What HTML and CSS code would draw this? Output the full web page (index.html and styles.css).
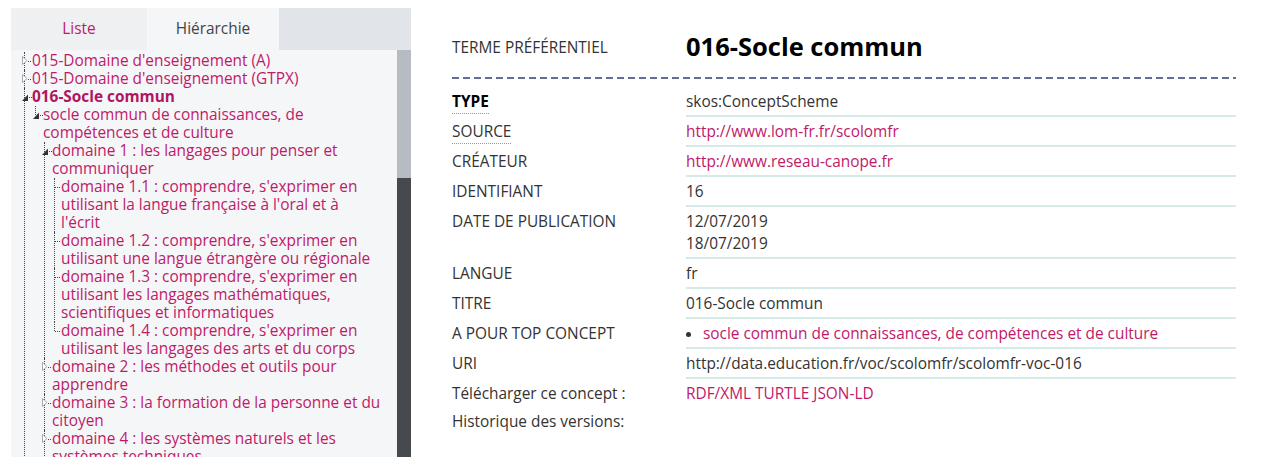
FILE: index.html
```html
<!DOCTYPE html>
<html lang="fr">
<head>
<meta charset="utf-8">
<title>016-Socle commun</title>
<link rel="stylesheet" href="styles.css">
</head>
<body>
<div class="page">
  <aside class="sidebar">
    <div class="tabs">
      <a class="tab tab-list">Liste</a>
      <a class="tab tab-active">Hiérarchie</a>
      <div class="tab-fill"></div>
    </div>
    <div class="tree-wrap">
      <div class="tree">
        <ul class="lvl0">
          <li>
            <div class="row"><svg class="ico" viewBox="0 0 11 18"><path d="M1.5 4.5 L6 8.5 L1.5 12.5 Z" fill="#fff" stroke="#aaa"/><path d="M7 9.5 H11" stroke="#444" stroke-dasharray="1 1"/></svg><a class="node">015-Domaine d'enseignement (A)</a></div>
          </li>
          <li>
            <div class="row"><svg class="ico" viewBox="0 0 11 18"><path d="M1.5 4.5 L6 8.5 L1.5 12.5 Z" fill="#fff" stroke="#aaa"/><path d="M7 9.5 H11" stroke="#444" stroke-dasharray="1 1"/></svg><a class="node">015-Domaine d'enseignement (GTPX)</a></div>
          </li>
          <li>
            <div class="row"><svg class="ico" viewBox="0 0 11 18"><path d="M1 13 L7 6.5 L7 13 Z" fill="#333"/><path d="M8 9.5 H11" stroke="#444" stroke-dasharray="1 1"/></svg><a class="node cur">016-Socle commun</a></div>
            <ul class="lvl1">
              <li class="last">
                <div class="row"><svg class="ico" viewBox="0 0 11 18"><path d="M1 13 L7 6.5 L7 13 Z" fill="#333"/><path d="M8 9.5 H11" stroke="#444" stroke-dasharray="1 1"/></svg><a class="node">socle commun de connaissances, de compétences et de culture</a></div>
                <ul class="lvl2">
                  <li>
                    <div class="row"><svg class="ico" viewBox="0 0 11 18"><path d="M1 13 L7 6.5 L7 13 Z" fill="#333"/><path d="M8 9.5 H11" stroke="#444" stroke-dasharray="1 1"/></svg><a class="node">domaine 1 : les langages pour penser et communiquer</a></div>
                    <ul class="lvl3">
                      <li>
                        <div class="row"><svg class="ico leaf" viewBox="0 0 10 18"><path d="M4 9.5 H10" stroke="#444" stroke-dasharray="1 1"/></svg><a class="node">domaine 1.1 : comprendre, s'exprimer en utilisant la langue française à l'oral et à l'écrit</a></div>
                      </li>
                      <li>
                        <div class="row"><svg class="ico leaf" viewBox="0 0 10 18"><path d="M4 9.5 H10" stroke="#444" stroke-dasharray="1 1"/></svg><a class="node">domaine 1.2 : comprendre, s'exprimer en utilisant une langue étrangère ou régionale</a></div>
                      </li>
                      <li>
                        <div class="row"><svg class="ico leaf" viewBox="0 0 10 18"><path d="M4 9.5 H10" stroke="#444" stroke-dasharray="1 1"/></svg><a class="node">domaine 1.3 : comprendre, s'exprimer en utilisant les langages mathématiques, scientifiques et informatiques</a></div>
                      </li>
                      <li class="last">
                        <div class="row"><svg class="ico leaf" viewBox="0 0 10 18"><path d="M4 9.5 H10" stroke="#444" stroke-dasharray="1 1"/></svg><a class="node">domaine 1.4 : comprendre, s'exprimer en utilisant les langages des arts et du corps</a></div>
                      </li>
                    </ul>
                  </li>
                  <li>
                    <div class="row"><svg class="ico" viewBox="0 0 11 18"><path d="M1.5 4.5 L6 8.5 L1.5 12.5 Z" fill="#fff" stroke="#aaa"/><path d="M7 9.5 H11" stroke="#444" stroke-dasharray="1 1"/></svg><a class="node">domaine 2 : les méthodes et outils pour apprendre</a></div>
                  </li>
                  <li>
                    <div class="row"><svg class="ico" viewBox="0 0 11 18"><path d="M1.5 4.5 L6 8.5 L1.5 12.5 Z" fill="#fff" stroke="#aaa"/><path d="M7 9.5 H11" stroke="#444" stroke-dasharray="1 1"/></svg><a class="node">domaine 3 : la formation de la personne et du citoyen</a></div>
                  </li>
                  <li>
                    <div class="row"><svg class="ico" viewBox="0 0 11 18"><path d="M1.5 4.5 L6 8.5 L1.5 12.5 Z" fill="#fff" stroke="#aaa"/><path d="M7 9.5 H11" stroke="#444" stroke-dasharray="1 1"/></svg><a class="node">domaine 4 : les systèmes naturels et les systèmes techniques</a></div>
                  </li>
                  <li class="last">
                    <div class="row"><svg class="ico" viewBox="0 0 11 18"><path d="M1.5 4.5 L6 8.5 L1.5 12.5 Z" fill="#fff" stroke="#aaa"/><path d="M7 9.5 H11" stroke="#444" stroke-dasharray="1 1"/></svg><a class="node">domaine 5 : les représentations du monde et l'activité humaine</a></div>
                  </li>
                </ul>
              </li>
            </ul>
          </li>
          <li class="last">
            <div class="row"><svg class="ico" viewBox="0 0 11 18"><path d="M1.5 4.5 L6 8.5 L1.5 12.5 Z" fill="#fff" stroke="#aaa"/><path d="M7 9.5 H11" stroke="#444" stroke-dasharray="1 1"/></svg><a class="node">017-Type de diffusion</a></div>
          </li>
        </ul>
      </div>
      <div class="scrollbar"><div class="thumb"></div></div>
    </div>
  </aside>

  <main class="content">
    <div class="pref">
      <div class="plabel">Terme préférentiel</div>
      <h1 class="title">016-Socle commun</h1>
    </div>
    <div class="dash"></div>
    <dl class="props">
      <div class="prop"><dt><span class="abbr strong">Type</span></dt><dd>skos:ConceptScheme</dd></div>
      <div class="prop"><dt><span class="abbr">Source</span></dt><dd><a class="link">http://www.lom-fr.fr/scolomfr</a></dd></div>
      <div class="prop"><dt>Créateur</dt><dd><a class="link">http://www.reseau-canope.fr</a></dd></div>
      <div class="prop"><dt>Identifiant</dt><dd>16</dd></div>
      <div class="prop"><dt>Date de publication</dt><dd>12/07/2019<br>18/07/2019</dd></div>
      <div class="prop"><dt>Langue</dt><dd>fr</dd></div>
      <div class="prop"><dt>Titre</dt><dd>016-Socle commun</dd></div>
      <div class="prop"><dt>A pour top concept</dt><dd><ul class="topc"><li><a class="link">socle commun de connaissances, de compétences et de culture</a></li></ul></dd></div>
      <div class="prop"><dt>URI</dt><dd>http://data.education.fr/voc/scolomfr/scolomfr-voc-016</dd></div>
    </dl>
    <div class="extra">
      <div class="xrow"><span>Télécharger ce concept :</span><span><a class="link">RDF/XML</a> <a class="link">TURTLE</a> <a class="link">JSON-LD</a></span></div>
      <div class="xrow"><span>Historique des versions:</span></div>
    </div>
  </main>
</div>
</body>
</html>
```

FILE: styles.css
```css
html, body {
  margin: 0;
  padding: 0;
}
body {
  font-family: "Open Sans", "Noto Sans", sans-serif;
  font-size: 15.4px;
  color: #333;
  background: #fff;
  overflow: hidden;
}
.page {
  display: flex;
  align-items: flex-start;
}

/* Sidebar */
.sidebar {
  flex: none;
  margin: 8px 0 0 11px;
  width: 400px;
  height: 449px;
  background: #f5f6f8;
  display: flex;
  flex-direction: column;
  overflow: hidden;
}
.tabs {
  flex: none;
  display: flex;
  height: 42px;
  background: #e1e4e8;
}
.tab {
  display: flex;
  align-items: center;
  justify-content: center;
  padding-bottom: 1px;
}
.tab-list {
  width: 136px;
  background: #eef0f2;
  color: #bf1a68;
}
.tab-active {
  width: 132px;
  background: #f5f6f8;
  color: #444;
}
.tree-wrap {
  flex: 1;
  min-height: 0;
  display: flex;
}
.tree {
  flex: 1;
  min-width: 0;
  overflow: hidden;
  padding: 2px 8px 0 13px;
}
.scrollbar {
  flex: none;
  width: 14px;
  background: #46494d;
}
.thumb {
  height: 128px;
  background: #b6bcc2;
}

.tree ul {
  list-style: none;
  margin: 0;
  padding: 0;
}
.tree li {
  position: relative;
  border-left: 1px dotted #444;
}
.tree li.last {
  border-left-color: transparent;
}
.tree li.last::before {
  content: "";
  position: absolute;
  left: -1px;
  top: 0;
  height: 9px;
  border-left: 1px dotted #444;
}
.tree .lvl1 { margin-left: 10px; }
.tree .lvl2 { margin-left: 8px; }
.tree .lvl3 { margin-left: 9px; margin-right: 14px; }
.row {
  display: flex;
  margin-left: -4px;
  line-height: 18px;
}
.ico {
  flex: none;
  width: 11px;
  height: 18px;
}
.ico.leaf {
  width: 10px;
}
.node {
  color: #bf1a68;
}
.node.cur {
  font-weight: 700;
  color: #b0155f;
}

/* Content */
.content {
  flex: none;
  margin-left: 41px;
  width: 784px;
}
.pref {
  display: grid;
  grid-template-columns: 234px 1fr;
  align-items: center;
  height: 32px;
  margin-top: 30px;
}
.plabel {
  text-transform: uppercase;
  color: #333;
  padding-top: 2px;
}
.title {
  margin: 0;
  font-size: 25.5px;
  font-weight: 700;
  line-height: 32px;
  color: #000;
}
.dash {
  height: 2px;
  margin-top: 15px;
  background: repeating-linear-gradient(90deg, #636e96 0 7px, transparent 7px 11px);
}
.props {
  margin: 8px 0 0;
}
.prop {
  display: grid;
  grid-template-columns: 234px 1fr;
}
.prop dt,
.prop dd {
  margin: 0;
  padding: 4px 0 2px;
  line-height: 22px;
}
.prop dt {
  text-transform: uppercase;
  color: #333;
}
.prop dd {
  border-bottom: 2px solid #d5ebe8;
  color: #333;
}
.abbr {
  border-bottom: 1px dotted #999;
  padding-bottom: 1px;
}
.abbr.strong {
  font-weight: 700;
  color: #000;
}
.link {
  color: #bf1a68;
}
.topc {
  margin: 0;
  padding-left: 17px;
  list-style: disc;
}
.extra {
  margin: 0;
}
.xrow {
  display: grid;
  grid-template-columns: 234px 1fr;
  line-height: 22px;
  padding: 4px 0 2px;
  color: #333;
}
```
